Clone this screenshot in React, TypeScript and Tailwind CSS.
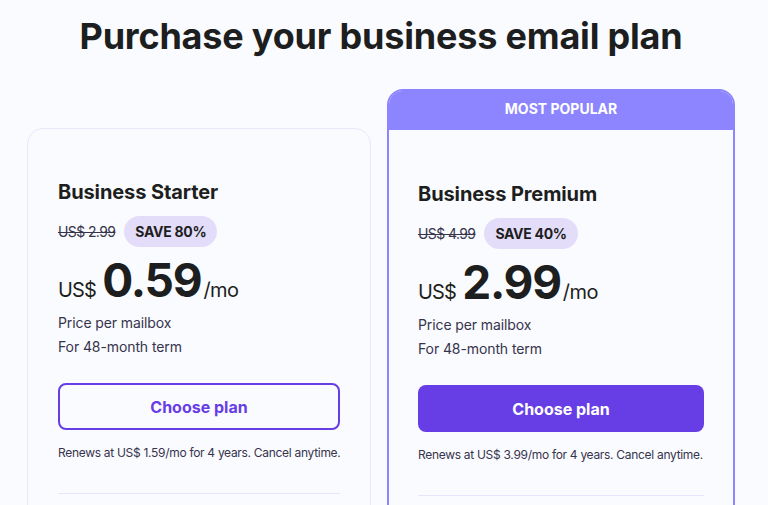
import React from 'react'

interface Plan {
  name: string
  oldPrice: string
  save: string
  price: string
  renew: string
  popular?: boolean
}

const plans: Plan[] = [
  { name: 'Business Starter', oldPrice: 'US$ 2.99', save: 'SAVE 80%', price: '0.59', renew: 'Renews at US$ 1.59/mo for 4 years. Cancel anytime.' },
  { name: 'Business Premium', oldPrice: 'US$ 4.99', save: 'SAVE 40%', price: '2.99', renew: 'Renews at US$ 3.99/mo for 4 years. Cancel anytime.', popular: true },
]

function PlanBody({ plan }: { plan: Plan }) {
  return (
    <div className="flex flex-col">
      <h2 className="text-[20px] leading-7 font-bold text-[#1d1e20] tracking-[-0.1px]">{plan.name}</h2>

      {/* old price + discount */}
      <div className="mt-[10px] flex items-center gap-[9px]">
        <span className="text-[14px] text-[#36344d] line-through tracking-[-0.6px]">{plan.oldPrice}</span>
        <span className="h-[31px] px-[11px] flex items-center rounded-full bg-[#e4ddfa] text-[14px] font-bold text-[#1d1e20] tracking-[-0.3px]">
          {plan.save}
        </span>
      </div>

      {/* price */}
      <div className="mt-[10px] flex items-baseline text-[#1d1e20]">
        <span className="text-[20px] mr-[6px] tracking-[-0.8px]">US$</span>
        <span className="text-[46px] leading-none font-bold tracking-[-1.2px]">{plan.price}</span>
        <span className="text-[20px] ml-[2px] tracking-[-0.6px]">/mo</span>
      </div>

      <div className="mt-[6px] text-[14px] leading-6 text-[#36344d] tracking-[-0.1px]">
        <p>Price per mailbox</p>
        <p>For 48-month term</p>
      </div>

      {plan.popular ? (
        <button className="mt-6 h-[47px] rounded-lg bg-[#673de6] text-white text-[16px] font-bold">
          Choose plan
        </button>
      ) : (
        <button className="mt-6 h-[47px] rounded-lg border-2 border-[#673de6] text-[#673de6] text-[16px] font-bold">
          Choose plan
        </button>
      )}

      <p className="mt-[15px] text-[12px] leading-4 text-[#36344d] tracking-[-0.3px] whitespace-nowrap">{plan.renew}</p>

      <div className="mt-[32px] h-px bg-[#e7e5fb]" />
      <div className="h-10" />
    </div>
  )
}

export default function App() {
  return (
    <div
      className="min-h-[505px] bg-[#fafbfe] overflow-hidden"
      style={{ fontFamily: 'Inter, "Noto Sans", sans-serif' }}
    >
      <div className="w-[708px] ml-[27px] flex flex-col">
        <h1 className="pt-4 text-center text-[36px] leading-10 font-bold text-[#1d1e20] tracking-[-0.2px]">
          Purchase your business email plan
        </h1>

        <div className="mt-[33px] flex items-start gap-4">
          {/* Starter */}
          <div className="mt-[39px] w-[344px] shrink-0 rounded-2xl border border-[#e9e7fb] bg-[#fafbfe] px-[30px] pt-[49px]">
            <PlanBody plan={plans[0]} />
          </div>

          {/* Premium */}
          <div className="w-[348px] shrink-0 rounded-2xl border-2 border-[#8c85ff] bg-[#fafbfe] overflow-hidden">
            <div className="h-[39px] pb-1 bg-[#8c85ff] flex items-center justify-center text-white text-[14px] font-bold">
              MOST POPULAR
            </div>
            <div className="px-[29px] pt-[50px]">
              <PlanBody plan={plans[1]} />
            </div>
          </div>
        </div>
      </div>
    </div>
  )
}
